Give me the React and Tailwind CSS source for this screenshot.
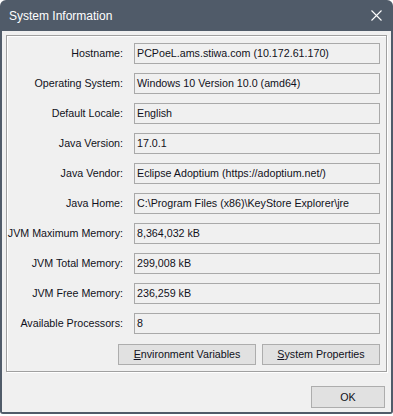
const rows = [
  ['Hostname:', 'PCPoeL.ams.stiwa.com (10.172.61.170)'],
  ['Operating System:', 'Windows 10 Version 10.0 (amd64)'],
  ['Default Locale:', 'English'],
  ['Java Version:', '17.0.1'],
  ['Java Vendor:', 'Eclipse Adoptium (https://adoptium.net/)'],
  ['Java Home:', 'C:\\Program Files (x86)\\KeyStore Explorer\\jre'],
  ['JVM Maximum Memory:', '8,364,032 kB'],
  ['JVM Total Memory:', '299,008 kB'],
  ['JVM Free Memory:', '236,259 kB'],
  ['Available Processors:', '8'],
];

function InfoRow({ label, value }) {
  return (
    <div className="flex items-center h-[21px]">
      <div className="w-[116px] text-right text-[#101020] whitespace-nowrap">{label}</div>
      <div className="ml-[11px] w-[246px] h-[21px] border border-[#a9a9a9] bg-[#f0f0f0] flex items-center px-[2px] text-[#101020] whitespace-nowrap overflow-hidden">
        {value}
      </div>
    </div>
  );
}

function Button({ children, className = '' }) {
  return (
    <button className={`h-[21px] border border-[#adadad] bg-[#e1e1e1] text-[#101020] flex items-center justify-center ${className}`}>
      {children}
    </button>
  );
}

export default function App() {
  return (
    <div
      className="w-[393px] h-[416px] bg-white text-[10.7px]"
      style={{ fontFamily: '"Liberation Sans", Arial, sans-serif' }}
    >
      <div className="h-[414px] bg-[#505b69] rounded-t-[6px] rounded-b-[3px] px-[2px] pb-[2px] flex flex-col">
        <div className="h-[31px] flex items-center justify-between pl-[7px] pr-[9px] text-white">
          <span className="text-[12px]">System Information</span>
          <svg width="11" height="11" viewBox="0 0 11 11" className="mt-[-1px]">
            <path d="M0.5 0.5 L10.5 10.5 M10.5 0.5 L0.5 10.5" stroke="white" strokeWidth="1.1" fill="none" />
          </svg>
        </div>
        <div className="flex-1 bg-[#f0f0f0] pt-[4px] flex flex-col">
          <div className="ml-[4px] w-[381px] border border-[#a0a0a0] shadow-[inset_1px_1px_0_#ffffff,1px_1px_0_#ffffff] pt-[7px] pr-[6px] pb-[6px]">
            <div className="flex flex-col gap-[9px]">
              {rows.map(([label, value]) => (
                <InfoRow key={label} label={label} value={value} />
              ))}
            </div>
            <div className="flex justify-end gap-[6px] mt-[10px]">
              <Button className="w-[138px]">
                <span><span className="underline">E</span>nvironment Variables</span>
              </Button>
              <Button className="w-[118px]">
                <span><span className="underline">S</span>ystem Properties</span>
              </Button>
            </div>
          </div>
          <div className="flex justify-end mt-[14px] mr-[6px]">
            <Button className="w-[74px] h-[22px] border-[#0078d7]">OK</Button>
          </div>
        </div>
      </div>
    </div>
  );
}
